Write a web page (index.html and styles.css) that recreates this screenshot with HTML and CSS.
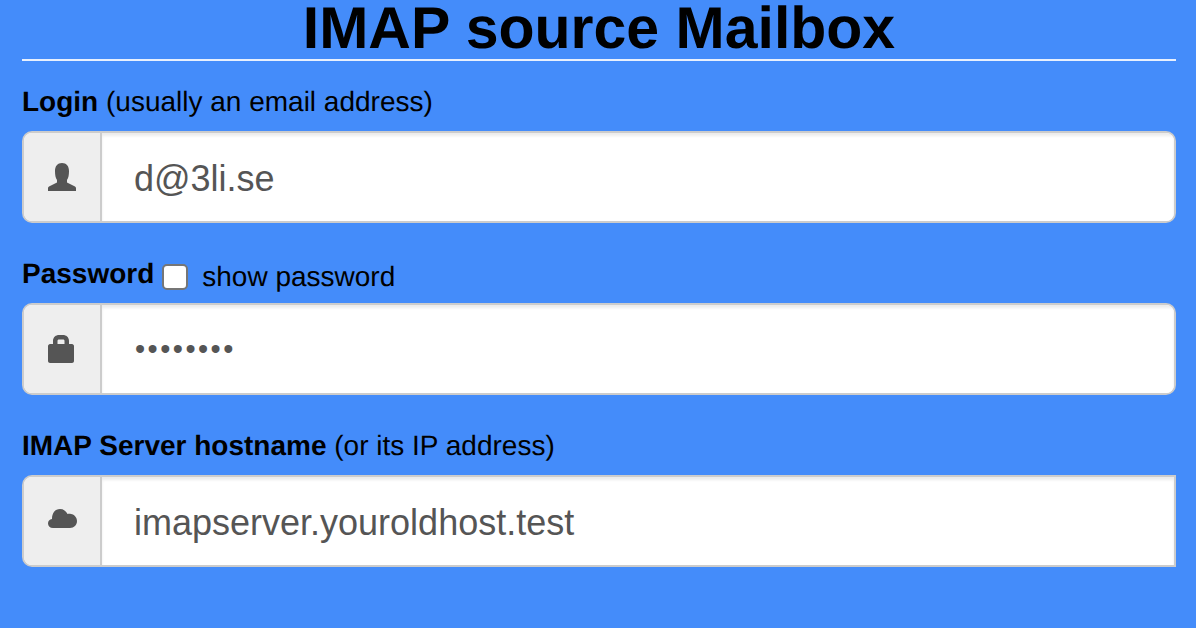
FILE: index.html
```html
<!DOCTYPE html>
<html lang="en">
<head>
    <meta charset="UTF-8">
    <title>IMAP source Mailbox</title>
    <link rel="stylesheet" href="styles.css">
</head>
<body>

<h1 class="title">IMAP source Mailbox</h1>

<form class="mailbox">
    <div class="field">
        <label class="field-label"><b>Login</b> (usually an email address)</label>
        <div class="input-group">
            <span class="addon">
                <svg class="icon" width="28" height="28" viewBox="0 0 28 28"><path d="M14 0C18.500 0 21 3 21 8C21 12 20.500 15 19 17L19 19.500L27 23.500C27.700 24 28 24.500 28 25.500L28 28L0 28L0 25.500C0 24.500 0.300 24 1 23.500L9 19.500L9 17C7.500 15 7 12 7 8C7 3 9.500 0 14 0Z"/></svg>
            </span>
            <input class="text-input" type="text" value="d@3li.se">
        </div>
    </div>

    <div class="field">
        <label class="field-label password-label"><b>Password</b> <input class="show-box" type="checkbox"> <span class="show-text">show password</span></label>
        <div class="input-group">
            <span class="addon">
                <svg class="icon lock" width="26" height="28" viewBox="0 0 26 28"><path fill-rule="evenodd" d="M2 9L5 9L5 6C5 2 8 0 11 0L15 0C18 0 21 2 21 6L21 9L24 9C25 9 26 10 26 11L26 26C26 27 25 28 24 28L2 28C1 28 0 27 0 26L0 11C0 10 1 9 2 9ZM9.500 9L16.500 9L16.500 6C16.500 5 16 4.500 15 4.500L11 4.500C10 4.500 9.500 5 9.500 6Z"/></svg>
            </span>
            <input class="text-input secret" type="password" value="12345678">
        </div>
    </div>

    <div class="field">
        <label class="field-label"><b>IMAP Server hostname</b> (or its IP address)</label>
        <div class="input-group square-end">
            <span class="addon">
                <svg class="icon cloud" width="29" height="19" viewBox="0 0 29 19"><path d="M5 19C2 19 0 17 0 14.500C0 12 1.500 10.500 4 10C4 4 7 0 12 0C15.500 0 18 2 19.500 5C20.500 4.700 22 4.700 23 5C26.500 5.500 29 8.500 29 12C29 16 26 19 22 19Z"/></svg>
            </span>
            <input class="text-input" type="text" value="imapserver.youroldhost.test">
        </div>
    </div>
</form>

</body>
</html>
```

FILE: styles.css
```css
html, body { height: 100%; }
body {
    margin: 0;
    padding: 0 20px 0 22px;
    background: #448cfa;
    font-family: "Liberation Sans", Arial, sans-serif;
    color: #000;
    overflow: hidden;
    text-rendering: geometricPrecision;
}
.title {
    margin: 0 0 26px;
    height: 59px;
    line-height: 57px;
    font-size: 59px;
    font-weight: bold;
    text-align: center;
    border-bottom: 2px solid #e8f0fe;
}
.field { margin-bottom: 36px; }
.field-label {
    display: block;
    height: 30px;
    line-height: 30px;
    font-size: 28px;
    margin-bottom: 14px;
}
.password-label { display: flex; align-items: center; gap: 8px; }
.show-box, .show-text { position: relative; top: 3px; }
.show-box {
    appearance: none;
    width: 26px;
    height: 26px;
    margin: 0 6px 0 0;
    background: #fff;
    border: 2px solid #767676;
    border-radius: 5px;
}
.input-group {
    display: flex;
    height: 92px;
    box-sizing: border-box;
    border: 2px solid #ccc;
    border-radius: 10px;
    overflow: hidden;
    background: #fff;
}
.square-end { border-radius: 10px 0 0 10px; }
.addon {
    display: flex;
    align-items: center;
    justify-content: center;
    width: 76px;
    flex: none;
    background: #eee;
    border-right: 2px solid #ccc;
}
.icon { fill: #555; display: block; }
.lock { margin-left: -2px; }
.cloud { margin-top: -5px; }
.text-input {
    flex: 1;
    min-width: 0;
    border: 0;
    outline: 0;
    padding: 3px 32px 0;
    font-family: inherit;
    font-size: 36px;
    color: #555;
    background: #fff;
    box-shadow: inset 0 3px 3px rgba(0, 0, 0, 0.08);
}
.secret {
    font-size: 29px;
    letter-spacing: 2.45px;
    padding: 0 32px 0 33px;
}
```
